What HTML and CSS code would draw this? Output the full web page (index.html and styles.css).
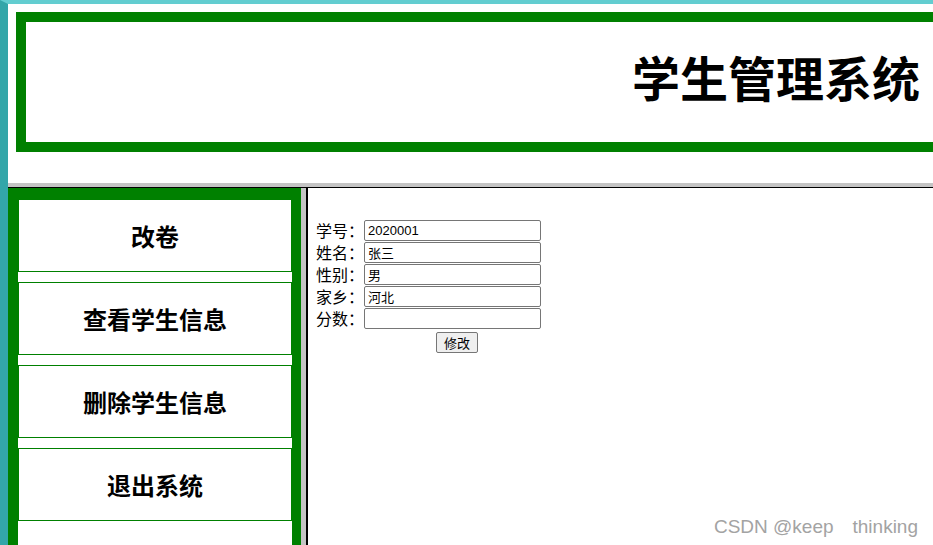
FILE: index.html
```html
<!DOCTYPE html>
<html lang="zh-CN">

<head>
    <meta charset="UTF-8">
    <meta name="viewport" content="width=device-width, initial-scale=1.0">
    <title>学生管理系统</title>
    <link rel="stylesheet" href="styles.css">
</head>

<body>
    <div class="window">
        <header class="top-frame">
            <div class="title-box">
                <h1>学生管理系统</h1>
            </div>
        </header>

        <div class="bottom-frames">
            <nav class="menu-frame">
                <ul class="menu">
                    <li>改卷</li>
                    <li>查看学生信息</li>
                    <li>删除学生信息</li>
                    <li>退出系统</li>
                </ul>
            </nav>

            <main class="content-frame">
                <form class="edit-form">
                    <label for="sno">学号：</label>
                    <input type="text" id="sno" value="2020001">
                    <label for="sname">姓名：</label>
                    <input type="text" id="sname" value="张三">
                    <label for="sex">性别：</label>
                    <input type="text" id="sex" value="男">
                    <label for="home">家乡：</label>
                    <input type="text" id="home" value="河北">
                    <label for="score">分数：</label>
                    <input type="text" id="score" value="">
                    <div class="btn-row">
                        <button type="button" class="edit-btn">修改</button>
                    </div>
                </form>
            </main>
        </div>

        <div class="watermark">CSDN @keep　thinking</div>
    </div>
</body>

</html>
```

FILE: styles.css
```css
html, body {
    margin: 0;
    padding: 0;
    height: 100%;
    overflow: hidden;
}

body {
    font-family: "Noto Sans CJK SC", "Liberation Sans", sans-serif;
    background-color: #fff;
}

.window {
    position: relative;
    height: 100%;
    box-sizing: border-box;
    border-top: 4px solid #62cdd0;
    border-left: 8px solid #33a6a9;
    display: flex;
    flex-direction: column;
}

/* top frame */
.top-frame {
    height: 183px;
    flex-shrink: 0;
    padding: 8px 0 0 8px;
    box-sizing: border-box;
    border-bottom: 4px solid #c4c4c4;
    overflow: hidden;
}

.title-box {
    width: 960px;
    height: 120px;
    border: 10px solid #008000;
    background-color: #fff;
}

.title-box h1 {
    margin: 0;
    padding-right: 66px;
    text-align: right;
    font-size: 48px;
    font-weight: bold;
    line-height: 108px;
    color: #000;
}

/* bottom frames */
.bottom-frames {
    flex: 1;
    display: flex;
    border-top: 1px solid #000;
    min-height: 0;
}

.menu-frame {
    width: 274px;
    flex-shrink: 0;
    background-color: #008000;
    padding: 11px 9px 0 10px;
    border-right: 5px solid #c4c4c4;
}

.menu {
    list-style: none;
    margin: 0;
    padding: 0;
    background-color: #fff;
    height: 100%;
}

.menu li {
    height: 71px;
    border: 1px solid #008000;
    margin-bottom: 10px;
    display: flex;
    align-items: center;
    justify-content: center;
    font-size: 24px;
    font-weight: bold;
    color: #000;
}

.content-frame {
    flex: 1;
    border-left: 2px solid #000;
    padding: 32px 8px 8px 8px;
}

.edit-form {
    display: grid;
    grid-template-columns: auto 177px;
    grid-auto-rows: 21px;
    row-gap: 1px;
    justify-content: start;
    align-items: center;
    font-size: 16px;
    color: #000;
}

.edit-form label {
    line-height: 21px;
}

.edit-form input {
    height: 21px;
    box-sizing: border-box;
    border: 1px solid #767676;
    border-radius: 2px;
    padding: 1px 3px;
    font-family: "Liberation Sans", "Noto Sans CJK SC", sans-serif;
    font-size: 13px;
    margin: 0;
}

.btn-row {
    grid-column: 1 / 3;
    align-self: start;
    margin-top: 2px;
    padding-left: 120px;
}

.edit-btn {
    display: block;
    height: 21px;
    padding: 0 7px;
    border: 1px solid #767676;
    border-radius: 2px;
    background-color: #efefef;
    font-family: "Noto Sans CJK SC", sans-serif;
    font-size: 13px;
    line-height: 17px;
    cursor: pointer;
}

.watermark {
    position: absolute;
    right: 15px;
    bottom: 7px;
    font-family: "Liberation Sans", "Noto Sans CJK SC", sans-serif;
    font-size: 19px;
    color: #a3a3a3;
}
```
